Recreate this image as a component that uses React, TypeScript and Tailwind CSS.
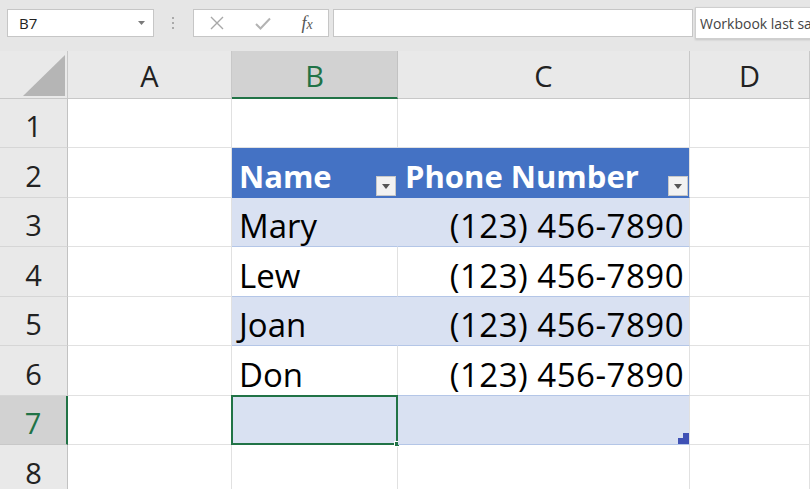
import React from "react";

const FONT = { fontFamily: '"Open Sans", "Noto Sans", sans-serif' };

type Row = { n: number; b?: string; c?: string; kind: "plain" | "head" | "band" | "white" };

const ROWS: Row[] = [
  { n: 1, kind: "plain" },
  { n: 2, b: "Name", c: "Phone Number", kind: "head" },
  { n: 3, b: "Mary", c: "(123) 456-7890", kind: "band" },
  { n: 4, b: "Lew", c: "(123) 456-7890", kind: "white" },
  { n: 5, b: "Joan", c: "(123) 456-7890", kind: "band" },
  { n: 6, b: "Don", c: "(123) 456-7890", kind: "white" },
  { n: 7, kind: "band" },
  { n: 8, kind: "plain" },
];

const ROW_H = [49, 50, 49, 50, 49, 50, 49, 50];

function FilterButton() {
  return (
    <div className="mb-[1px] mr-[1px] flex h-[20px] w-[20px] shrink-0 items-center justify-center self-end border border-[#c8c8c8] bg-[#f2f2f2]">
      <svg width="8" height="5" viewBox="0 0 8 5">
        <polygon points="0,0 8,0 4,5" fill="#555" />
      </svg>
    </div>
  );
}

function Toolbar() {
  return (
    <div className="relative flex h-[51px] items-start bg-[#e6e6e6] pt-[9px] pl-[7px]">
      {/* name box */}
      <div className="flex h-[28px] w-[147px] items-center justify-between border border-[#c6c6c6] bg-white pl-[11px] pr-[8px] text-[15px] text-[#222]">
        <span>B7</span>
        <svg width="7" height="4" viewBox="0 0 7 4">
          <polygon points="0,0 7,0 3.5,4" fill="#7a7a7a" />
        </svg>
      </div>

      {/* grip */}
      <div className="ml-[17px] flex h-[28px] w-[4px] flex-col items-center justify-center gap-[3px]">
        <div className="h-[2px] w-[2px] bg-[#aaa]" />
        <div className="h-[2px] w-[2px] bg-[#aaa]" />
        <div className="h-[2px] w-[2px] bg-[#aaa]" />
      </div>

      {/* cancel / enter / fx */}
      <div className="ml-[18px] flex h-[28px] w-[136px] items-center border border-[#c6c6c6] bg-white">
        <div className="flex w-[46px] justify-center">
          <svg width="14" height="14" viewBox="0 0 14 14">
            <path d="M1 1 L13 13 M13 1 L1 13" stroke="#a8a8a8" strokeWidth="1.4" />
          </svg>
        </div>
        <div className="flex w-[46px] justify-center">
          <svg width="16" height="13" viewBox="0 0 16 13">
            <path d="M1 7 L5.5 11.5 L15 1.5" stroke="#b3b3b3" strokeWidth="2" fill="none" />
          </svg>
        </div>
        <div className="flex flex-1 justify-center">
          <span className="text-[18px] italic text-[#555]" style={{ fontFamily: '"Liberation Serif", serif' }}>
            f<span className="text-[14px]">x</span>
          </span>
        </div>
      </div>

      {/* formula input */}
      <div className="ml-[4px] h-[28px] w-[360px] border border-[#c6c6c6] bg-white" />

      {/* tooltip */}
      <div className="absolute left-[695px] top-[7px] flex h-[32px] w-[140px] items-center border border-[#cfcfcf] bg-white pl-[4px] text-[14px] whitespace-nowrap text-[#444] shadow-[0_1px_2px_rgba(0,0,0,0.15)]">
        Workbook last saved
      </div>
    </div>
  );
}

function ColHeader({ label, selected }: { label: string; selected?: boolean }) {
  return (
    <div
      className={
        selected
          ? "flex items-center justify-center border-r border-b-2 border-r-[#c2c2c2] border-b-[#217346] bg-[#d2d2d2] pt-[3px] text-[29px] text-[#217346]"
          : "flex items-center justify-center border-r border-b border-[#c8c8c8] bg-[#e9e9e9] pt-[3px] text-[29px] text-[#222]"
      }
    >
      {label}
    </div>
  );
}

function RowHeader({ n }: { n: number }) {
  const selected = n === 7;
  return (
    <div
      className={
        selected
          ? "flex items-center justify-center border-b border-r-2 border-b-[#c8c8c8] border-r-[#217346] bg-[#d2d2d2] pt-[6px] text-[29px] text-[#217346]"
          : "flex items-center justify-center border-b border-r border-b-[#d6d6d6] border-r-[#c2c2c2] bg-[#e9e9e9] pt-[6px] text-[29px] text-[#222]"
      }
    >
      {n}
    </div>
  );
}

function TableCell({ row, col }: { row: Row; col: "b" | "c" }) {
  const text = row[col];
  const isHead = row.kind === "head";
  const blue = row.kind === "band";
  const bg = isHead ? "bg-[#4472c4]" : blue ? "bg-[#d9e1f2]" : "bg-white";
  const rightBorder =
    col === "b"
      ? isHead
        ? "border-r-[#4472c4]"
        : blue
          ? "border-r-[#d9e1f2]"
          : "border-r-[#e1e1e1]"
      : "border-r-[#e1e1e1]";
  const bottom = isHead ? "border-b-[#4472c4]" : "border-b-[#b4c6e7]";
  const align = col === "c" && !isHead ? "justify-end pr-[5px]" : "justify-between pl-[7px]";
  const textCls = isHead
    ? "pb-[5px] text-[31px] font-bold text-white"
    : col === "c"
      ? "pb-[4px] text-[33px] tracking-[0.5px] text-black"
      : "pb-[4px] text-[33px] text-black";

  return (
    <div className={`relative flex border-r border-b ${bg} ${rightBorder} ${bottom} ${align}`}>
      {text && <span className={`self-end leading-none ${textCls}`}>{text}</span>}
      {isHead && <FilterButton />}
      {row.n === 7 && col === "b" && (
        <>
          <div className="pointer-events-none absolute -left-[1px] -top-[1px] -right-[1px] -bottom-[1px] border-2 border-[#217346]" />
          <div className="absolute -right-[3px] -bottom-[3px] h-[6px] w-[6px] border border-white bg-[#217346]" />
        </>
      )}
      {row.n === 7 && col === "c" && (
        <svg className="absolute right-0 bottom-0" width="11" height="11" viewBox="0 0 11 11">
          <polygon points="5,0 11,0 11,11 0,11 0,5 5,5" fill="#3f51b5" />
        </svg>
      )}
    </div>
  );
}

function PlainCell() {
  return <div className="border-r border-b border-[#e1e1e1] bg-white" />;
}

export default function App() {
  return (
    <div className="h-[489px] w-[810px] overflow-hidden bg-white" style={FONT}>
      <Toolbar />
      <div
        className="grid grid-cols-[68px_164px_166px_292px_1fr]"
        style={{ gridTemplateRows: ["48px", ...ROW_H.map((h) => `${h}px`)].join(" ") }}
      >
        {/* corner */}
        <div className="border-r border-b border-[#c8c8c8] bg-[#e9e9e9]">
          <svg width="67" height="47" viewBox="0 0 67 47">
            <polygon points="23,45 65,45 65,4" fill="#b5b5b5" />
          </svg>
        </div>
        <ColHeader label="A" />
        <ColHeader label="B" selected />
        <ColHeader label="C" />
        <ColHeader label="D" />

        {ROWS.map((row) => (
          <React.Fragment key={row.n}>
            <RowHeader n={row.n} />
            <PlainCell />
            {row.kind === "plain" ? <PlainCell /> : <TableCell row={row} col="b" />}
            {row.kind === "plain" ? <PlainCell /> : <TableCell row={row} col="c" />}
            <PlainCell />
          </React.Fragment>
        ))}
      </div>
    </div>
  );
}
